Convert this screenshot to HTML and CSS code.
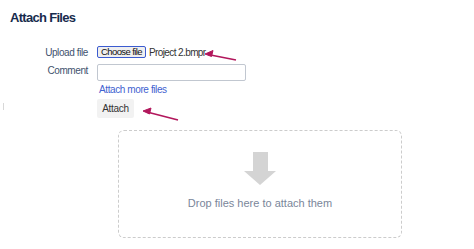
FILE: index.html
```html
<!DOCTYPE html>
<html lang="en">
<head>
  <meta charset="UTF-8">
  <title>Attach Files</title>
  <link rel="stylesheet" href="styles.css">
</head>
<body>
  <div class="page">
    <h1 class="title">Attach Files</h1>
    <form class="attach-form">
      <label class="field-label">Upload file</label>
      <div class="field file-field">
        <button type="button" class="choose-button">Choose file</button>
        <span class="file-name">Project 2.bmpr</span>
      </div>
      <label class="field-label">Comment</label>
      <div class="field">
        <input class="comment-input" type="text">
      </div>
      <div class="field more-field">
        <a class="more-link" href="#">Attach more files</a>
      </div>
      <div class="field">
        <button type="button" class="attach-button">Attach</button>
      </div>
      <div class="field drop-field">
        <div class="drop-zone">
          <svg class="drop-arrow" viewBox="0 0 32 33">
            <path d="M9 0H24V19H32L16 33L0 19H9Z" />
          </svg>
          <div class="drop-text">Drop files here to attach them</div>
        </div>
      </div>
    </form>
    <div class="edge-mark"></div>
    <svg class="annotations" viewBox="0 0 474 249">
      <path d="M236 60L208 54.5" />
      <path d="M205 54L213 50.5L211.5 56.5Z" class="head" />
      <path d="M178 120L147 112" />
      <path d="M143 111L151 108L149.5 114Z" class="head" />
    </svg>
  </div>
</body>
</html>
```

FILE: styles.css
```css
body {
  margin: 0;
  background: #fff;
  font-family: "Liberation Sans", Arial, sans-serif;
  font-size: 10px;
  color: #42526e;
}
.page {
  position: relative;
  width: 474px;
  height: 249px;
  padding: 10px 0 0 10px;
  box-sizing: border-box;
}
.title {
  margin: 0;
  font-size: 13px;
  font-weight: bold;
  letter-spacing: -0.7px;
  color: #172b4d;
  line-height: 16px;
}
.attach-form {
  display: grid;
  grid-template-columns: 78px 1fr;
  column-gap: 9px;
  margin-top: 18px;
  letter-spacing: -0.4px;
}
.field-label {
  grid-column: 1;
  display: flex;
  align-items: center;
  justify-content: flex-end;
  color: #42526e;
}
.field {
  grid-column: 2;
}
.file-field {
  display: flex;
  align-items: center;
  gap: 3px;
  height: 16px;
}
.choose-button {
  font-family: inherit;
  font-size: 9.5px;
  letter-spacing: -0.6px;
  white-space: nowrap;
  color: #111;
  background: #efefef;
  border: 1px solid #3b5bd0;
  border-radius: 2px;
  padding: 0 3px;
  height: 12px;
  line-height: 10px;
}
.file-name {
  color: #333;
  letter-spacing: -0.6px;
}
.comment-input {
  display: block;
  margin-top: 4px;
  width: 149px;
  height: 17px;
  box-sizing: border-box;
  border: 1px solid #c1c7d0;
  border-radius: 2px;
}
.more-field {
  margin-top: 2px;
  padding-left: 2px;
  height: 14px;
  line-height: 14px;
}
.more-link {
  color: #3f62d0;
  text-decoration: none;
}
.attach-button {
  margin-top: 2px;
  font-family: inherit;
  font-size: 10px;
  letter-spacing: -0.3px;
  color: #333;
  background: #f2f2f2;
  border: none;
  border-radius: 2px;
  width: 37px;
  height: 19px;
  padding: 0;
}
.drop-field {
  padding-left: 21px;
  margin-top: 12px;
}
.drop-zone {
  width: 284px;
  height: 108px;
  box-sizing: border-box;
  border: 1px dashed #ccc;
  border-radius: 6px;
  display: flex;
  flex-direction: column;
  align-items: center;
  letter-spacing: 0;
}
.drop-arrow {
  width: 32px;
  height: 33px;
  margin-top: 21px;
  fill: #d4d4d4;
}
.drop-text {
  margin-top: 12px;
  font-size: 11px;
  color: #7a869a;
}
.edge-mark {
  position: absolute;
  left: 3px;
  top: 103px;
  width: 1px;
  height: 7px;
  background: #d8d8d8;
}
.annotations {
  position: absolute;
  left: 0;
  top: 0;
  width: 474px;
  height: 249px;
  pointer-events: none;
  fill: none;
  stroke: #b2175c;
  stroke-width: 1.6;
}
.annotations .head {
  fill: #b2175c;
  stroke-width: 1;
}
```
